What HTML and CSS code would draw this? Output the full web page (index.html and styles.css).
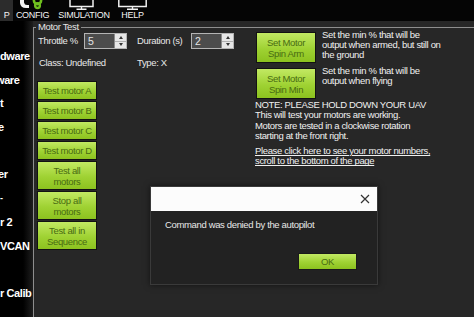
FILE: index.html
```html
<!DOCTYPE html>
<html>
<head>
<meta charset="utf-8">
<link rel="stylesheet" href="styles.css">
</head>
<body>
<div class="app">
  <div class="toolbar">
    <div class="tool tool-p">
      <span class="tool-icon-spacer"></span>
      <span class="tool-label">P</span>
    </div>
    <div class="tool tool-config">
      <svg class="tool-icon" width="27" height="10" viewBox="0 0 27 10">
        <path d="M1 0 L5 0 L5 2.5 Q5.5 5 8 5 L10 5 L10 8 L7 8 Q1.5 8 1 3 Z" fill="#f2f2f2"/>
        <circle cx="18.5" cy="0.5" r="3.6" fill="none" stroke="#6fbf1f" stroke-width="2.6"/>
        <circle cx="18.5" cy="5.6" r="2.4" fill="none" stroke="#6fbf1f" stroke-width="2.4"/>
      </svg>
      <span class="tool-label">CONFIG</span>
    </div>
    <div class="tool tool-sim">
      <svg class="tool-icon" width="52" height="10" viewBox="0 0 52 10">
        <rect x="12" y="-5" width="23" height="11.5" fill="none" stroke="#f0f0f0" stroke-width="1.5"/>
        <path d="M23.5 6.5 L23.5 8.5 M18.5 9.2 L28.5 9.2" stroke="#f0f0f0" stroke-width="1.4"/>
      </svg>
      <span class="tool-label">SIMULATION</span>
    </div>
    <div class="tool tool-help">
      <svg class="tool-icon" width="29" height="10" viewBox="0 0 29 10">
        <rect x="0.8" y="-5" width="27.4" height="11.5" fill="none" stroke="#f0f0f0" stroke-width="1.5"/>
        <path d="M14.5 6.5 L14.5 8.5 M9 9.2 L20 9.2" stroke="#f0f0f0" stroke-width="1.4"/>
      </svg>
      <span class="tool-label">HELP</span>
    </div>
  </div>

  <div class="content">
    <div class="sidebar">
      <div class="side-item">dware</div>
      <div class="side-item ind4">ware</div>
      <div class="side-item">t</div>
      <div class="side-item ind2">e</div>
      <div class="side-item"></div>
      <div class="side-item ind2">er</div>
      <div class="side-item ind3">-</div>
      <div class="side-item">r 2</div>
      <div class="side-item">VCAN</div>
      <div class="side-item"></div>
      <div class="side-item">r Calib</div>
    </div>

    <div class="main">
      <fieldset class="group">
        <legend class="legend">Motor Test</legend>
        <div class="group-body">
          <div class="left-col">
            <div class="params">
              <span class="lbl">Throttle %</span>
              <div class="spin"><span class="spin-val">5</span><span class="spin-btns"><i class="up"></i><i class="dn"></i></span></div>
              <span class="lbl lbl-gap">Duration (s)</span>
              <div class="spin"><span class="spin-val">2</span><span class="spin-btns"><i class="up"></i><i class="dn"></i></span></div>
              <span class="lbl info-class">Class: Undefined</span>
              <span class="lbl lbl-gap info-type">Type: X</span>
            </div>
            <div class="motor-btns">
              <div class="gbtn single">Test motor A</div>
              <div class="gbtn single">Test motor B</div>
              <div class="gbtn single">Test motor C</div>
              <div class="gbtn single">Test motor D</div>
              <div class="gbtn double">Test all<br>motors</div>
              <div class="gbtn double">Stop all<br>motors</div>
              <div class="gbtn double">Test all in<br>Sequence</div>
            </div>
          </div>
          <div class="right-col">
            <div class="spin-row">
              <div class="gbtn tall">Set Motor<br>Spin Arm</div>
              <div class="desc">Set the min % that will be<br>output when armed, but still on<br>the ground</div>
            </div>
            <div class="spin-row">
              <div class="gbtn tall">Set Motor<br>Spin Min</div>
              <div class="desc">Set the min % that will be<br>output when flying</div>
            </div>
            <div class="note">NOTE: PLEASE HOLD DOWN YOUR UAV<br>This will test your motors are working.<br>Motors are tested in a clockwise rotation<br>starting at the front right.</div>
            <div class="link">Please click here to see your motor numbers,<br>scroll to the bottom of the page</div>
          </div>
        </div>
      </fieldset>
    </div>
  </div>

  <div class="dialog">
    <div class="dialog-title">
      <svg class="close" width="10" height="10" viewBox="0 0 10 10">
        <path d="M1 1 L9 9 M9 1 L1 9" stroke="#333" stroke-width="1.2"/>
      </svg>
    </div>
    <div class="dialog-body">
      <div class="dialog-msg">Command was denied by the autopilot</div>
      <div class="dialog-actions">
        <div class="gbtn ok">OK</div>
      </div>
    </div>
  </div>
</div>
</body>
</html>
```

FILE: styles.css
```css
* { box-sizing: border-box; }
html, body { margin: 0; padding: 0; }
body {
  width: 474px;
  height: 317px;
  overflow: hidden;
  background: #262626;
  font-family: "Liberation Sans", Arial, sans-serif;
  font-size: 9.5px;
  letter-spacing: -0.35px;
  color: #ececec;
}
.app {
  position: relative;
  width: 474px;
  height: 317px;
  display: flex;
  flex-direction: column;
}

/* toolbar */
.toolbar {
  height: 21px;
  background: #050505;
  display: flex;
  align-items: flex-start;
}
.tool {
  display: flex;
  flex-direction: column;
  align-items: center;
}
.tool-icon, .tool-icon-spacer {
  display: block;
  height: 10px;
}
.tool-label {
  line-height: 11px;
  font-size: 9px;
  letter-spacing: -0.3px;
  color: #f4f4f4;
  white-space: nowrap;
}
.tool-p {
  width: 13px;
  height: 21px;
  background: #2c2c2c;
}
.tool-config { margin-left: 4px; width: 31px; }
.tool-sim { margin-left: 10px; width: 52px; }
.tool-help { margin-left: 8px; width: 29px; }

/* content */
.content {
  flex: 1;
  display: flex;
  min-height: 0;
}
.sidebar {
  width: 33px;
  background: linear-gradient(to right, #000 0, #000 70%, #161616 92%, #1e1e1e 100%);
  padding-top: 24px;
  overflow: hidden;
}
.side-item {
  height: 23.7px;
  line-height: 23.7px;
  font-weight: bold;
  font-size: 11px;
  letter-spacing: -0.4px;
  color: #fff;
  white-space: nowrap;
}
.ind2 { text-indent: -2px; }
.ind3 { font-size: 9px; }
.ind4 { text-indent: -4px; }

.main {
  flex: 1;
  min-width: 0;
  background: #272727;
}
.group {
  margin: 0;
  padding: 0 0 0 4px;
  border: 1px solid #8e8e8e;
  border-right: none;
  border-bottom: none;
  min-width: 0;
  height: 100%;
}
.legend {
  padding: 0 2px;
  margin-left: -2px;
  line-height: 12px;
  color: #e6e6e6;
}
.group-body {
  display: flex;
}
.left-col {
  width: 217px;
  display: flex;
  flex-direction: column;
}
.params {
  display: grid;
  grid-template-columns: 46px 43px 64px 43px;
  grid-template-rows: 16px 12px;
  row-gap: 8px;
  align-items: center;
}
.lbl {
  white-space: nowrap;
  line-height: 12px;
  color: #e8e8e8;
}
.lbl-gap { padding-left: 10px; }
.info-class { grid-column: 1 / 3; padding-left: 1px; }
.info-type { grid-column: 3 / 5; }

.spin {
  display: flex;
  width: 43px;
  height: 16px;
  border: 1px solid #b4b4b4;
  background: #4c4c4c;
}
.spin-val {
  flex: 1;
  padding-left: 3px;
  line-height: 14px;
  font-size: 10.5px;
  color: #e4e4e4;
}
.spin-btns {
  width: 12px;
  display: flex;
  flex-direction: column;
  background: #e6e6e6;
  border-left: 1px solid #8a8a8a;
}
.spin-btns i {
  flex: 1;
  display: flex;
  align-items: center;
  justify-content: center;
}
.spin-btns i + i { border-top: 1px solid #b0b0b0; }
.spin-btns .up::after {
  content: "";
  border-left: 2.5px solid transparent;
  border-right: 2.5px solid transparent;
  border-bottom: 3px solid #333;
}
.spin-btns .dn::after {
  content: "";
  border-left: 2.5px solid transparent;
  border-right: 2.5px solid transparent;
  border-top: 3px solid #333;
}

/* green buttons */
.gbtn {
  width: 60px;
  border: 1px solid #121212;
  background: linear-gradient(#c2e963, #9fd233 55%, #8cc21f);
  color: #486b12;
  display: flex;
  align-items: center;
  justify-content: center;
  text-align: center;
  line-height: 11px;
  white-space: nowrap;
}
.motor-btns {
  margin-top: 12px;
  margin-left: -1px;
  display: flex;
  flex-direction: column;
  gap: 1px;
}
.single { height: 19px; }
.double { height: 29px; }

.right-col {
  display: flex;
  flex-direction: column;
}
.spin-row {
  display: flex;
  align-items: flex-start;
  gap: 6px;
  margin-left: 1px;
}
.spin-row:first-child { margin-top: -1px; }
.spin-row + .spin-row { margin-top: 5px; }
.tall { height: 31px; }
.desc {
  margin-top: -2px;
  line-height: 10px;
  color: #f0f0f0;
  white-space: nowrap;
}
.note {
  margin-top: 1px;
  line-height: 10.3px;
  color: #f0f0f0;
  white-space: nowrap;
}
.link {
  margin-top: 5px;
  line-height: 10.3px;
  color: #f0f0f0;
  text-decoration: underline;
  white-space: nowrap;
}

/* dialog */
.dialog {
  position: absolute;
  left: 150px;
  top: 186px;
  width: 228px;
  height: 99px;
  border: 1px solid #3a3a3a;
  background: #222;
  box-shadow: 0 0 6px rgba(0, 0, 0, 0.55);
  display: flex;
  flex-direction: column;
}
.dialog-title {
  height: 24px;
  background: #fcfcfc;
  display: flex;
  align-items: center;
  justify-content: flex-end;
  padding-right: 7px;
}
.close { display: block; }
.dialog-body {
  flex: 1;
  padding: 8px 20px 0 14px;
  display: flex;
  flex-direction: column;
}
.dialog-msg {
  line-height: 12px;
  color: #e8e8e8;
  white-space: nowrap;
}
.dialog-actions {
  margin-top: 22px;
  display: flex;
  justify-content: flex-end;
}
.ok { height: 17px; width: 59px; border-color: #1a1a1a; }
```
